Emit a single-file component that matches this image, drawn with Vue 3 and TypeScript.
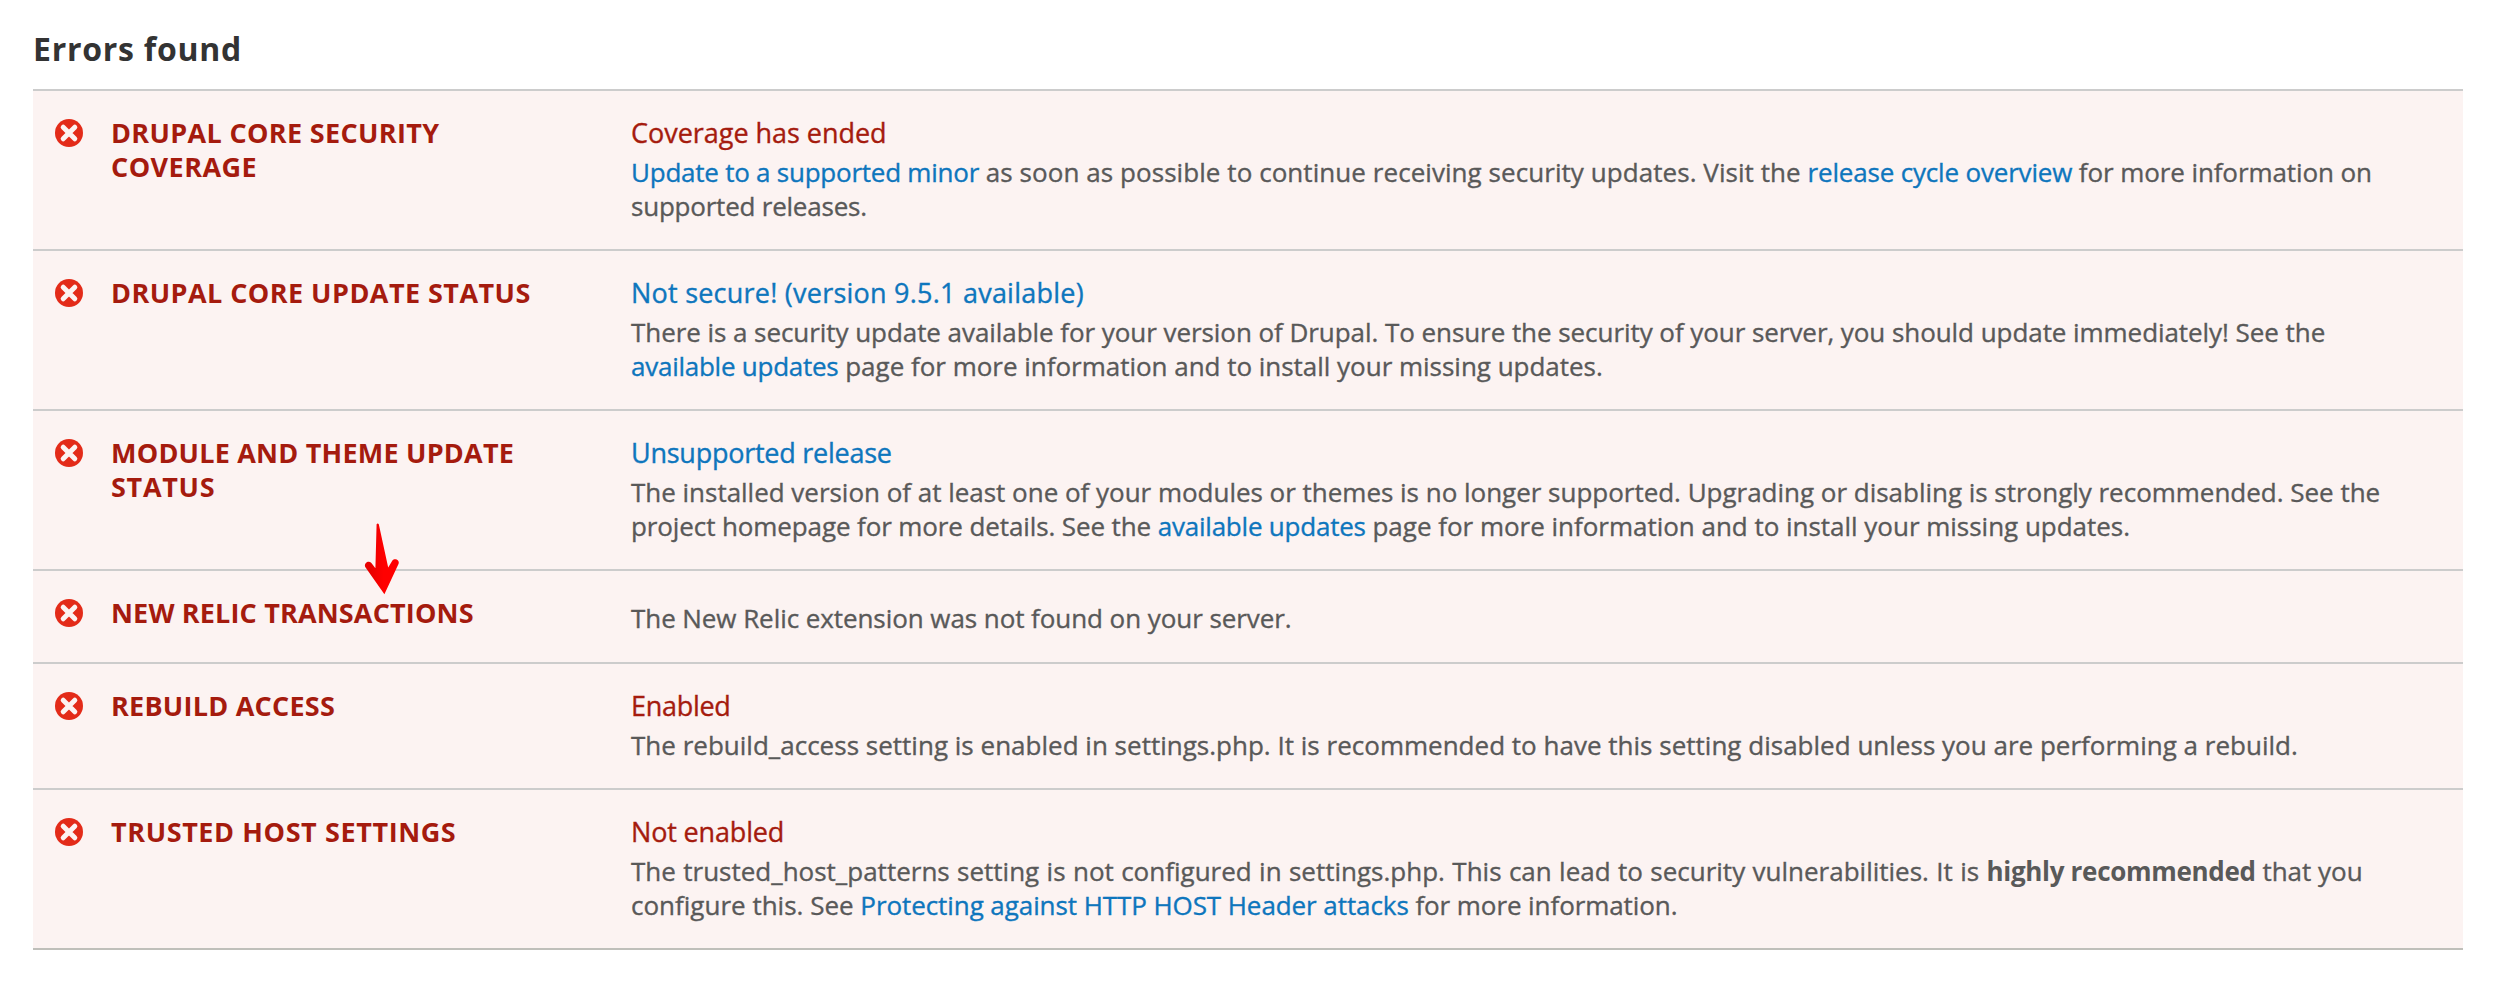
<script setup lang="ts">
interface Segment {
  text: string
  kind?: 'link' | 'strong'
  track?: number
  word?: number
}
interface TitleLine {
  text: string
  track: number
}
interface ReportEntry {
  title: TitleLine[]
  value?: { text: string; link?: boolean; track: number }
  lines: Segment[][]
  pointer?: boolean
}

const entries: ReportEntry[] = [
  {
    title: [
      { text: 'DRUPAL CORE SECURITY', track: 0.34 },
      { text: 'COVERAGE', track: 0.45 },
    ],
    value: { text: 'Coverage has ended', track: -0.03 },
    lines: [
      [
        { text: 'Update to a supported minor', kind: 'link', track: -0.24 },
        { text: ' as soon as possible to continue receiving security updates. Visit the ', track: 0.06 },
        { text: 'release cycle overview', kind: 'link', track: -0.18 },
        { text: ' for more information on', track: -0.1 },
      ],
      [{ text: 'supported releases.', track: -0.22 }],
    ],
  },
  {
    title: [{ text: 'DRUPAL CORE UPDATE STATUS', track: 0.45 }],
    value: { text: 'Not secure! (version 9.5.1 available)', link: true, track: 0.23 },
    lines: [
      [
        {
          text: 'There is a security update available for your version of Drupal. To ensure the security of your server, you should update immediately! See the',
          track: -0.06,
        },
      ],
      [
        { text: 'available updates', kind: 'link', track: -0.25 },
        { text: ' page for more information and to install your missing updates.', track: -0.02 },
      ],
    ],
  },
  {
    title: [
      { text: 'MODULE AND THEME UPDATE', track: 0.22 },
      { text: 'STATUS', track: 0.7 },
    ],
    value: { text: 'Unsupported release', link: true, track: -0.25 },
    lines: [
      [
        {
          text: 'The installed version of at least one of your modules or themes is no longer supported. Upgrading or disabling is strongly recommended. See the',
          track: -0.02,
        },
      ],
      [
        { text: 'project homepage for more details. See the ', track: -0.11 },
        { text: 'available updates', kind: 'link', track: -0.22 },
        { text: ' page for more information and to install your missing updates.', track: -0.02 },
      ],
    ],
  },
  {
    title: [{ text: 'NEW RELIC TRANSACTIONS', track: 0.16 }],
    lines: [[{ text: 'The New Relic extension was not found on your server.', track: -0.07 }]],
    pointer: true,
  },
  {
    title: [{ text: 'REBUILD ACCESS', track: 0.25 }],
    value: { text: 'Enabled', track: -0.3 },
    lines: [
      [
        {
          text: 'The rebuild_access setting is enabled in settings.php. It is recommended to have this setting disabled unless you are performing a rebuild.',
          track: 0.01,
        },
      ],
    ],
  },
  {
    title: [{ text: 'TRUSTED HOST SETTINGS', track: 0.6 }],
    value: { text: 'Not enabled', track: -0.16 },
    lines: [
      [
        {
          text: 'The trusted_host_patterns setting is not configured in settings.php. This can lead to security vulnerabilities. It is ',
          word: 0.62,
        },
        { text: 'highly recommended', kind: 'strong', track: -0.31 },
        { text: ' that you' },
      ],
      [
        { text: 'configure this. See ' },
        { text: 'Protecting against HTTP HOST Header attacks', kind: 'link', track: -0.08 },
        { text: ' for more information.', track: -0.08 },
      ],
    ],
  },
]

const spacing = (track?: number, word?: number) => ({
  letterSpacing: track ? `${track}px` : undefined,
  wordSpacing: word ? `${word}px` : undefined,
})
const tagFor = (kind?: string) => (kind === 'link' ? 'a' : kind === 'strong' ? 'strong' : 'span')
</script>

<template>
  <main class="report">
    <h3 class="heading">Errors found</h3>
    <div class="list">
      <section v-for="(entry, i) in entries" :key="i" class="entry">
        <svg class="icon" viewBox="0 0 28 28" aria-hidden="true">
          <circle cx="14" cy="14" r="14" fill="#e32b19" />
          <path
            d="M8.2 8.2 19.8 19.8M19.8 8.2 8.2 19.8"
            stroke="#fcf3f2"
            stroke-width="5"
            stroke-linecap="round"
          />
        </svg>
        <h4 class="title">
          <span v-for="line in entry.title" :key="line.text" class="line" :style="spacing(line.track)">{{ line.text }}</span>
        </h4>
        <div class="details">
          <div
            v-if="entry.value"
            class="value"
            :class="{ 'value-link': entry.value.link }"
            :style="spacing(entry.value.track)"
          >{{ entry.value.text }}</div>
          <div class="description">
            <div v-for="(line, l) in entry.lines" :key="l" class="line">
              <component
                :is="tagFor(seg.kind)"
                v-for="(seg, s) in line"
                :key="s"
                :class="seg.kind"
                :style="spacing(seg.track, seg.word)"
              >{{ seg.text }}</component>
            </div>
          </div>
        </div>
        <svg v-if="entry.pointer" class="pointer" viewBox="0 0 40 80" aria-hidden="true">
          <defs>
            <linearGradient id="pointer-fill" x1="0" x2="1" y1="0" y2="0">
              <stop offset="0.15" stop-color="#e80000" />
              <stop offset="0.55" stop-color="#ff0000" />
            </linearGradient>
          </defs>
          <path
            d="M16.6 4.2Q17.7 2.6 18.8 4.2L28.2 47.4 32.4 40.6C34.6 37.6 40 40.2 38.6 43.8L24.4 74.3 5.4 47.3C3.4 43.2 8.4 39.8 11.4 43L15.4 48.2Z"
            fill="url(#pointer-fill)"
          />
        </svg>
      </section>
    </div>
  </main>
</template>

<style>
body {
  margin: 0;
  background: #fff;
}
</style>

<style scoped>
.report {
  box-sizing: border-box;
  height: 990px;
  padding: 28px 39px 0 33px;
  font-family: "Open Sans", "Noto Sans", sans-serif;
  font-size: 26px;
  line-height: 34px;
  color: #595959;
}
.heading {
  margin: 0 0 19px;
  font-size: 32px;
  line-height: 42px;
  font-weight: 700;
  letter-spacing: 0.75px;
  color: #333;
}
.list {
  border-bottom: 2px solid #bfbfba;
}
.entry {
  position: relative;
  display: grid;
  grid-template-columns: 56px 520px 1fr;
  box-sizing: border-box;
  min-height: 93px;
  padding: 25px 0 26px 22px;
  border-top: 2px solid #ccc;
  background: #fcf3f2;
}
.icon {
  width: 28px;
  height: 28px;
  margin-top: 3px;
}
.title {
  margin: 0;
  font-size: 27px;
  font-weight: 700;
  color: #a51b0e;
}
.details {
  -webkit-text-stroke: 0.35px currentColor;
}
.line {
  display: block;
  white-space: pre;
}
.value {
  font-size: 27px;
  white-space: nowrap;
  color: #a51b0e;
}
.value-link,
.link {
  color: #0e76bd;
}
.description {
  margin-top: 5px;
}
.strong {
  font-weight: 700;
  -webkit-text-stroke-width: 0;
}
.pointer {
  position: absolute;
  left: 327px;
  top: -51px;
  width: 40px;
  height: 80px;
}
</style>
